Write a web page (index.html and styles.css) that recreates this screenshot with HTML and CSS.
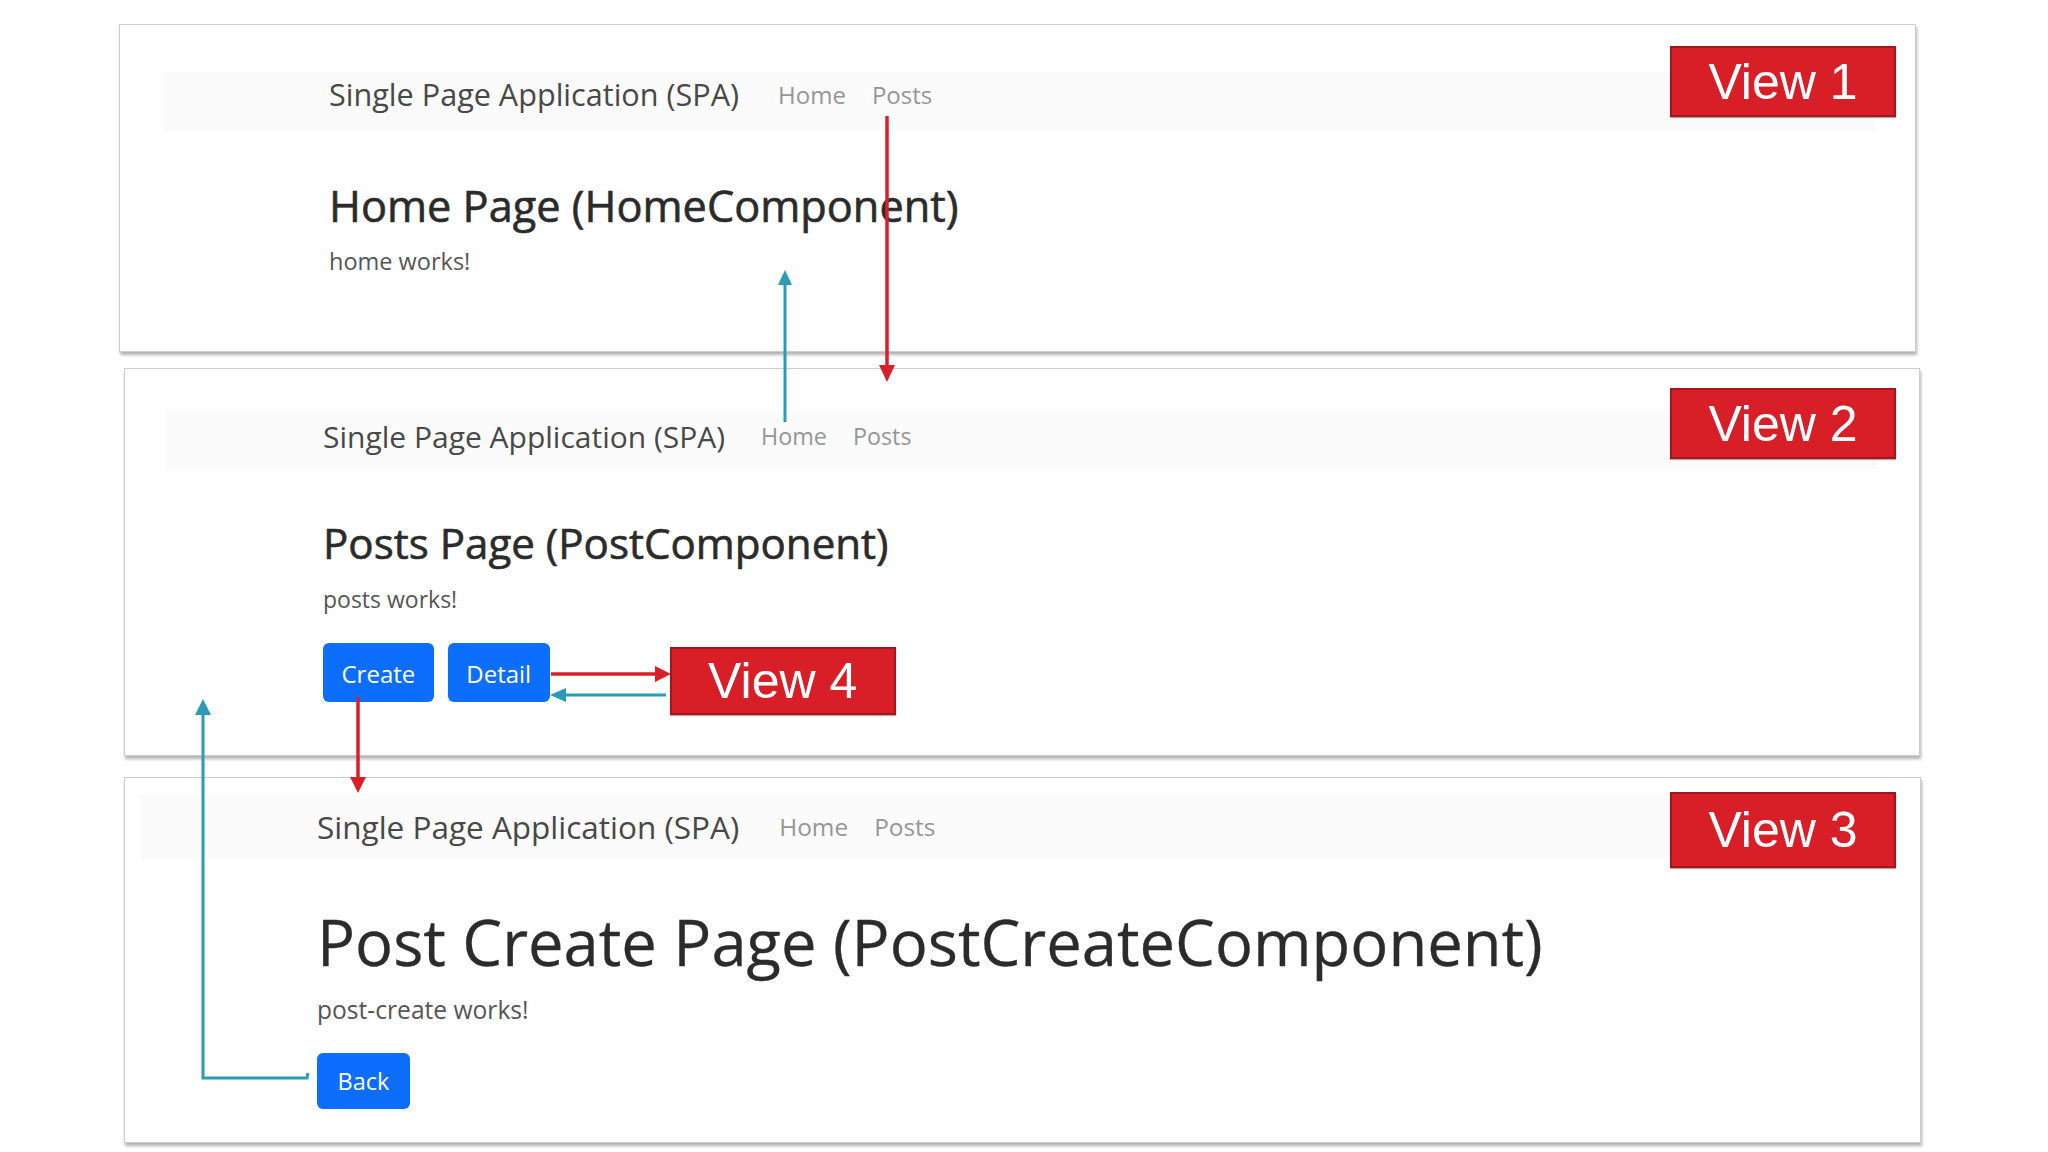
FILE: index.html
```html
<!DOCTYPE html>
<html lang="en">
<head>
<meta charset="utf-8">
<title>SPA Views</title>
<link rel="stylesheet" href="styles.css">
</head>
<body>
<main class="page">
  <section class="frame frame-1">
    <nav class="navbar">
      <span class="brand">Single Page Application (SPA)</span>
      <ul class="nav-links">
        <li class="nav-link">Home</li>
        <li class="nav-link">Posts</li>
      </ul>
    </nav>
    <div class="content">
      <h2 class="page-title">Home Page (HomeComponent)</h2>
      <p class="page-text">home works!</p>
    </div>
    <div class="badge badge-corner">View 1</div>
  </section>

  <section class="frame frame-2">
    <nav class="navbar">
      <span class="brand">Single Page Application (SPA)</span>
      <ul class="nav-links">
        <li class="nav-link">Home</li>
        <li class="nav-link">Posts</li>
      </ul>
    </nav>
    <div class="content">
      <h2 class="page-title">Posts Page (PostComponent)</h2>
      <p class="page-text">posts works!</p>
      <div class="actions">
        <button class="btn">Create</button>
        <button class="btn">Detail</button>
        <div class="badge badge-inline">View 4</div>
      </div>
    </div>
    <div class="badge badge-corner">View 2</div>
  </section>

  <section class="frame frame-3">
    <nav class="navbar">
      <span class="brand">Single Page Application (SPA)</span>
      <ul class="nav-links">
        <li class="nav-link">Home</li>
        <li class="nav-link">Posts</li>
      </ul>
    </nav>
    <div class="content">
      <h1 class="page-title">Post Create Page (PostCreateComponent)</h1>
      <p class="page-text">post-create works!</p>
      <div class="actions">
        <button class="btn btn-back">Back</button>
      </div>
    </div>
    <div class="badge badge-corner">View 3</div>
  </section>

  <svg class="arrows" width="2048" height="1152" viewBox="0 0 2048 1152" aria-hidden="true">
    <!-- View 1 Posts -> View 2 -->
    <line x1="887" y1="116" x2="887" y2="368" stroke="#d9202a" stroke-width="3.5"/>
    <polygon points="879,365 895,365 887,382" fill="#d9202a"/>
    <!-- View 2 Home -> View 1 -->
    <line x1="785" y1="422" x2="785" y2="283" stroke="#2b9bb6" stroke-width="3"/>
    <polygon points="778,285 792,285 785,270" fill="#2b9bb6"/>
    <!-- Detail -> View 4 -->
    <line x1="551" y1="674" x2="658" y2="674" stroke="#d9202a" stroke-width="3.5"/>
    <polygon points="655,666 655,682 671,674" fill="#d9202a"/>
    <!-- View 4 -> Detail -->
    <line x1="666" y1="695" x2="564" y2="695" stroke="#2b9bb6" stroke-width="3"/>
    <polygon points="566,688 566,702 550,695" fill="#2b9bb6"/>
    <!-- Create -> View 3 -->
    <line x1="358" y1="697" x2="358" y2="780" stroke="#d9202a" stroke-width="3.5"/>
    <polygon points="350,777 366,777 358,793" fill="#d9202a"/>
    <!-- Back -> View 2 -->
    <polyline points="308,1073 307,1078 203,1078 203,712" fill="none" stroke="#2b9bb6" stroke-width="3"/>
    <polygon points="195,715 211,715 203,699" fill="#2b9bb6"/>
  </svg>
</main>
</body>
</html>
```

FILE: styles.css
```css
html, body {
  margin: 0;
  padding: 0;
  background: #ffffff;
}

body {
  font-family: "Open Sans", "Noto Sans", "DejaVu Sans", sans-serif;
}

.page {
  position: relative;
  width: 2048px;
  height: 1152px;
  box-sizing: border-box;
  padding-top: 24px;
  display: flex;
  flex-direction: column;
  align-items: flex-start;
  overflow: hidden;
}

.frame {
  position: relative;
  box-sizing: border-box;
  background: #ffffff;
  border: 1px solid #cdcdcd;
  box-shadow: 1px 3px 3px rgba(0, 0, 0, 0.3);
  display: flex;
  flex-direction: column;
  align-items: stretch;
}

.frame-1 {
  margin-left: 119px;
  width: 1797px;
  height: 328px;
}

.frame-2 {
  margin-left: 124px;
  margin-top: 16px;
  width: 1796px;
  height: 388px;
}

.frame-3 {
  margin-left: 124px;
  margin-top: 21px;
  width: 1797px;
  height: 366px;
}

/* navbar */
.navbar {
  box-sizing: border-box;
  display: flex;
  align-items: center;
  background: #fbfbfc;
}

.frame-1 .navbar {
  margin: 47px 39px 0 42px;
  height: 60px;
  padding: 0 0 14px 167px;
}

.frame-2 .navbar {
  margin: 42px 40px 0 42px;
  height: 58px;
  padding: 0 0 8px 156px;
}

.frame-3 .navbar {
  margin: 16px 60px 0 16px;
  height: 66px;
  padding: 0 0 0 176px;
}

.brand {
  color: #484848;
  line-height: 1.5;
  white-space: nowrap;
}

.frame-1 .brand { font-size: 30.6px; margin-right: 39px; }
.frame-2 .brand { font-size: 30px; margin-right: 36px; }
.frame-3 .brand { font-size: 31.5px; margin-right: 40px; }

.nav-links {
  list-style: none;
  margin: 0;
  padding: 0;
  display: flex;
  gap: 26px;
}

.nav-link {
  color: #969696;
  font-size: 24px;
  line-height: 1.5;
}

.frame-2 .nav-link { font-size: 23.3px; }
.frame-3 .nav-link { font-size: 24.4px; }

/* content */
.content {
  display: flex;
  flex-direction: column;
  align-items: flex-start;
}

.frame-1 .content { margin-left: 209px; }
.frame-2 .content { margin-left: 198px; }
.frame-3 .content { margin-left: 192px; }

.page-title {
  margin: 0;
  font-weight: 400;
  color: #2b2b2b;
  line-height: 1.2;
  white-space: nowrap;
  -webkit-text-stroke: 0.6px #2b2b2b;
}

.frame-1 .page-title { font-size: 43.3px; margin-top: 48px; }
.frame-2 .page-title { font-size: 42.1px; margin-top: 49px; }
.frame-3 .page-title { font-size: 63.3px; margin-top: 44px; -webkit-text-stroke: 0.3px #2b2b2b; }

.page-text {
  margin: 0;
  color: #555555;
  line-height: 1.5;
}

.frame-1 .page-text { font-size: 23.5px; margin-top: 12px; }
.frame-2 .page-text { font-size: 23px; margin-top: 13px; }
.frame-3 .page-text { font-size: 24.6px; margin-top: 12px; }

/* buttons */
.actions {
  display: flex;
  align-items: flex-start;
}

.frame-2 .actions { margin-top: 27px; gap: 14px; }
.frame-3 .actions { margin-top: 24px; }

.btn {
  box-sizing: border-box;
  font-family: inherit;
  font-size: 24px;
  line-height: 1;
  color: #ffffff;
  background: #0d6efd;
  border: 0;
  border-radius: 6px;
  height: 59px;
  padding: 2px 18.5px 0;
  display: flex;
  align-items: center;
  justify-content: center;
}

.btn-back {
  height: 56px;
  font-size: 23.5px;
  padding: 2px 20.5px 0;
}

/* view badges */
.badge {
  box-sizing: border-box;
  width: 226px;
  background: #d81f28;
  border: 2px solid #a2161c;
  box-shadow: 0 1px 1px rgba(90, 0, 0, 0.35);
  color: #ffffff;
  font-family: "Liberation Sans", Arial, sans-serif;
  font-size: 50px;
  line-height: 1;
  display: flex;
  align-items: center;
  justify-content: center;
}

.badge-corner {
  position: absolute;
  right: 19px;
}

.frame-1 .badge-corner { top: 21px; height: 71px; }
.frame-2 .badge-corner { top: 19px; height: 71px; right: 23px; }
.frame-3 .badge-corner { top: 14px; height: 76px; right: 24px; }

.badge-inline {
  height: 68px;
  margin-top: 4px;
  margin-left: 106px;
}

/* arrows overlay */
.arrows {
  position: absolute;
  left: 0;
  top: 0;
  pointer-events: none;
}
```
